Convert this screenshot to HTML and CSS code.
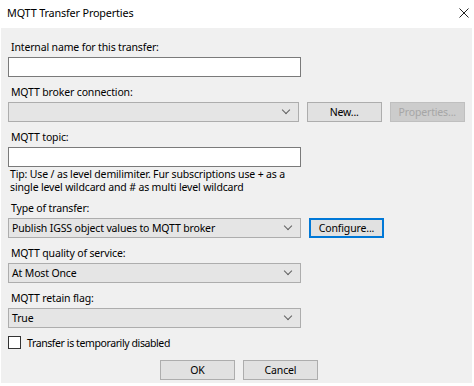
FILE: index.html
```html
<!DOCTYPE html>
<html lang="en">
<head>
    <meta charset="utf-8" />
    <title>MQTT Transfer Properties</title>
    <link rel="stylesheet" href="styles.css">
</head>
<body>
    <div class="window">
        <div class="titlebar">
            <span class="title">MQTT Transfer Properties</span>
            <span class="close">
                <svg width="10" height="10" viewBox="0 0 10 10"><path d="M0.5 0.5 L9.5 9.5 M9.5 0.5 L0.5 9.5" stroke="#222" stroke-width="1" fill="none"/></svg>
            </span>
        </div>
        <div class="dialog">
            <div class="field">
                <div class="label">Internal name for this transfer:</div>
                <div class="textbox"></div>
            </div>
            <div class="field">
                <div class="label">MQTT broker connection:</div>
                <div class="row">
                    <div class="combo"><span class="value"></span><span class="chevron"></span></div>
                    <div class="button">New...</div>
                    <div class="button disabled">Properties...</div>
                </div>
            </div>
            <div class="field">
                <div class="label">MQTT topic:</div>
                <div class="textbox"></div>
                <div class="tip">Tip: Use / as level demilimiter. Fur subscriptions use + as a<br />single level wildcard and # as multi level wildcard</div>
            </div>
            <div class="field">
                <div class="label">Type of transfer:</div>
                <div class="row">
                    <div class="combo"><span class="value">Publish IGSS object values to MQTT broker</span><span class="chevron"></span></div>
                    <div class="button focused">Configure...</div>
                </div>
            </div>
            <div class="field">
                <div class="label">MQTT quality of service:</div>
                <div class="combo"><span class="value">At Most Once</span><span class="chevron"></span></div>
            </div>
            <div class="field">
                <div class="label">MQTT retain flag:</div>
                <div class="combo"><span class="value">True</span><span class="chevron"></span></div>
            </div>
            <div class="check">
                <span class="box"></span>Transfer is temporarily disabled
            </div>
            <div class="buttons">
                <div class="button">OK</div>
                <div class="button">Cancel</div>
            </div>
        </div>
    </div>
</body>
</html>
```

FILE: styles.css
```css
html, body {
    margin: 0;
    padding: 0;
    background: #fff;
}
body {
    font-family: "Noto Sans", "Open Sans", sans-serif;
    font-size: 10.5px;
    letter-spacing: -0.15px;
    color: #000;
    width: 474px;
    height: 386px;
    overflow: hidden;
}
.window {
    display: flex;
    flex-direction: column;
    height: 386px;
}
.titlebar {
    height: 28px;
    display: flex;
    align-items: center;
    justify-content: space-between;
    padding: 0 5px 0 7px;
    font-size: 10.8px;
}
.titlebar .title {
    color: #000;
    margin-top: -4px;
}
.close {
    display: flex;
    width: 14px;
    justify-content: center;
    margin-top: -3px;
    margin-right: -2px;
}
.dialog {
    flex: 1;
    margin: 0 2px 3px 1px;
    background: #f0f0f0;
    padding: 12px 7px 0 7px;
    display: flex;
    flex-direction: column;
    gap: 8px;
}
.field {
    display: flex;
    flex-direction: column;
}
.label {
    height: 15px;
    line-height: 15px;
    margin-bottom: 2px;
    padding-left: 3px;
}
.textbox {
    width: 291px;
    height: 18px;
    background: #fff;
    border: 1px solid #7a7a7a;
}
.tip {
    line-height: 13px;
    padding-left: 2px;
    margin-top: 1px;
    margin-bottom: -1px;
}
.row {
    display: flex;
    gap: 8px;
}
.combo {
    width: 291px;
    height: 18px;
    background: #e5e5e5;
    border: 1px solid #adadad;
    display: flex;
    align-items: center;
    justify-content: space-between;
}
.combo .value {
    padding-left: 3px;
}
.chevron {
    width: 5px;
    height: 5px;
    border-right: 1px solid #606060;
    border-bottom: 1px solid #606060;
    transform: rotate(45deg);
    margin: 0 9px 4px 0;
}
.button {
    width: 73px;
    height: 18px;
    background: #e1e1e1;
    border: 1px solid #adadad;
    display: flex;
    align-items: center;
    justify-content: center;
}
.button.disabled {
    width: 74px;
    background: #cccccc;
    border-color: #bfbfbf;
    color: #a6a6a6;
}
.button.focused {
    border: 1px solid #0078d7;
    box-shadow: inset 0 0 0 1px #0078d7;
}
.check {
    display: flex;
    align-items: center;
    height: 15px;
    margin-top: -1px;
    letter-spacing: -0.4px;
}
.check .box {
    width: 11px;
    height: 11px;
    background: #fff;
    border: 1px solid #333;
    margin-right: 6px;
}
.buttons {
    display: flex;
    justify-content: center;
    gap: 8px;
    margin-top: 2px;
    padding-left: 5px;
}
```
